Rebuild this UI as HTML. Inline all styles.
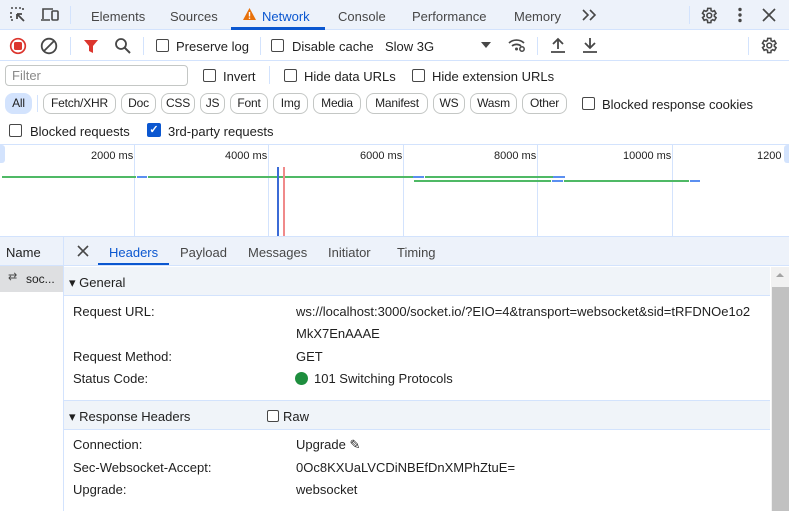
<!DOCTYPE html>
<html><head><meta charset="utf-8"><style>
*{box-sizing:border-box;margin:0;padding:0}
body{width:789px;height:511px;overflow:hidden;background:#fff;font-family:"Liberation Sans",sans-serif;font-size:13px;color:#1f1f1f;position:relative}
.a{position:absolute;white-space:nowrap}
.cb{position:absolute;width:13px;height:13px;border:1.5px solid #474747;border-radius:2px;background:#fff}
.chip{position:absolute;top:93px;height:21px;border:1px solid #c4c7c5;border-radius:8px;font-size:12px;line-height:19px;text-align:center;color:#1f1f1f;letter-spacing:-0.2px}
.vs{position:absolute;width:1px;background:#d3e3fd}
.k{position:absolute;left:73px;font-size:13px;color:#1f1f1f}
.v{position:absolute;left:296px;font-size:13px;color:#1f1f1f}
</style></head><body>
<!-- top tab bar -->
<div class="a" style="left:0;top:0;width:789px;height:30px;background:#edf2fa;border-bottom:1px solid #d3e3fd"></div>
<svg class="a" style="left:9px;top:6px" width="18" height="18" viewBox="0 0 18 18"><path d="M2 2h2M6 2h2M10 2h2M2 6v2M2 10v2M2 14h2M14 2v2" stroke="#474747" stroke-width="1.6" fill="none"/><path d="M8 8l7 7M8 8h5M8 8v5" stroke="#474747" stroke-width="1.8" fill="none"/></svg>
<svg class="a" style="left:40px;top:6px" width="20" height="18" viewBox="0 0 20 18"><path d="M3 13V3h10M1 14h9" stroke="#474747" stroke-width="1.6" fill="none"/><rect x="12" y="5" width="6" height="9" rx="1" stroke="#474747" stroke-width="1.6" fill="none"/></svg>
<div class="vs" style="left:70px;top:6px;height:18px"></div>
<div class="a" style="left:91px;top:9px;color:#474747">Elements</div>
<div class="a" style="left:170px;top:9px;color:#474747">Sources</div>
<svg class="a" style="left:242px;top:7px" width="15" height="14" viewBox="0 0 15 14"><path d="M7.5 1L14 13H1z" fill="#e8710a"/><rect x="6.8" y="5" width="1.4" height="4.5" fill="#fff"/><rect x="6.8" y="10.5" width="1.4" height="1.4" fill="#fff"/></svg>
<div class="a" style="left:262px;top:9px;color:#0b57d0">Network</div>
<div class="a" style="left:231px;top:27px;width:94px;height:3px;background:#0b57d0"></div>
<div class="a" style="left:338px;top:9px;color:#474747">Console</div>
<div class="a" style="left:412px;top:9px;color:#474747">Performance</div>
<div class="a" style="left:514px;top:9px;color:#474747">Memory</div>
<svg class="a" style="left:581px;top:8px" width="16" height="14"><path d="M2 2l5 5-5 5M9 2l5 5-5 5" stroke="#474747" stroke-width="1.6" fill="none"/></svg>
<div class="vs" style="left:689px;top:6px;height:18px"></div>
<svg class="a" style="left:699px;top:6px" width="19" height="19" viewBox="0 0 24 24"><path d="M19.4 13a7.5 7.5 0 0 0 0-2l2.1-1.6-2-3.5-2.5 1a7.6 7.6 0 0 0-1.7-1L15 3h-4l-.4 2.7a7.6 7.6 0 0 0-1.7 1l-2.5-1-2 3.5L6.6 11a7.5 7.5 0 0 0 0 2l-2.1 1.6 2 3.5 2.5-1a7.6 7.6 0 0 0 1.7 1L11 21h4l.4-2.7a7.6 7.6 0 0 0 1.7-1l2.5 1 2-3.5z" fill="none" stroke="#474747" stroke-width="2"/><circle cx="13" cy="12" r="3" fill="none" stroke="#474747" stroke-width="2"/></svg>
<svg class="a" style="left:737px;top:7px" width="6" height="16"><circle cx="3" cy="2.5" r="1.7" fill="#474747"/><circle cx="3" cy="8" r="1.7" fill="#474747"/><circle cx="3" cy="13.5" r="1.7" fill="#474747"/></svg>
<svg class="a" style="left:762px;top:8px" width="14" height="14"><path d="M1 1l12 12M13 1L1 13" stroke="#474747" stroke-width="1.7"/></svg>
<!-- toolbar -->
<div class="a" style="left:0;top:60px;width:789px;height:1px;background:#d3e3fd"></div>
<svg class="a" style="left:9px;top:37px" width="18" height="18"><circle cx="9" cy="9" r="7.3" fill="none" stroke="#dc362e" stroke-width="1.7"/><rect x="5" y="5" width="8" height="8" rx="1.5" fill="#dc362e"/></svg>
<svg class="a" style="left:40px;top:37px" width="18" height="18"><circle cx="9" cy="9" r="7.3" fill="none" stroke="#474747" stroke-width="1.8"/><path d="M4 14L14 4" stroke="#474747" stroke-width="1.8"/></svg>
<div class="vs" style="left:70px;top:37px;height:18px"></div>
<svg class="a" style="left:83px;top:38px" width="16" height="16"><path d="M1 2h14l-5 6v7l-4-2V8z" fill="#dc362e"/></svg>
<svg class="a" style="left:114px;top:37px" width="18" height="18"><circle cx="7" cy="7" r="5" fill="none" stroke="#474747" stroke-width="1.8"/><path d="M10.5 10.5L16 16" stroke="#474747" stroke-width="2"/></svg>
<div class="vs" style="left:143px;top:37px;height:18px"></div>
<div class="cb" style="left:156px;top:39px"></div>
<div class="a" style="left:176px;top:39px">Preserve log</div>
<div class="vs" style="left:260px;top:37px;height:18px"></div>
<div class="cb" style="left:271px;top:39px"></div>
<div class="a" style="left:292px;top:39px">Disable cache</div>
<div class="a" style="left:385px;top:39px">Slow 3G</div>
<svg class="a" style="left:480px;top:41px" width="12" height="8"><path d="M1 1h10L6 7z" fill="#474747"/></svg>
<svg class="a" style="left:507px;top:36px" width="20" height="18" viewBox="0 0 20 18"><path d="M2 7a11 11 0 0 1 15 0M5 10a7 7 0 0 1 9 0" stroke="#474747" stroke-width="1.7" fill="none"/><circle cx="9.5" cy="13" r="1.5" fill="#474747"/><circle cx="15" cy="13" r="2.2" fill="none" stroke="#474747" stroke-width="1.5"/></svg>
<div class="vs" style="left:537px;top:37px;height:18px"></div>
<svg class="a" style="left:549px;top:36px" width="18" height="18"><path d="M9 13V3M4 8l5-5 5 5M2 16h14" stroke="#474747" stroke-width="1.8" fill="none"/></svg>
<svg class="a" style="left:581px;top:36px" width="18" height="18"><path d="M9 2v10M4 7l5 5 5-5M2 16h14" stroke="#474747" stroke-width="1.8" fill="none"/></svg>
<div class="vs" style="left:748px;top:37px;height:18px"></div>
<svg class="a" style="left:759px;top:36px" width="19" height="19" viewBox="0 0 24 24"><path d="M19.4 13a7.5 7.5 0 0 0 0-2l2.1-1.6-2-3.5-2.5 1a7.6 7.6 0 0 0-1.7-1L15 3h-4l-.4 2.7a7.6 7.6 0 0 0-1.7 1l-2.5-1-2 3.5L6.6 11a7.5 7.5 0 0 0 0 2l-2.1 1.6 2 3.5 2.5-1a7.6 7.6 0 0 0 1.7 1L11 21h4l.4-2.7a7.6 7.6 0 0 0 1.7-1l2.5 1 2-3.5z" fill="none" stroke="#474747" stroke-width="2"/><circle cx="13" cy="12" r="3" fill="none" stroke="#474747" stroke-width="2"/></svg>
<!-- filter row -->
<div class="a" style="left:5px;top:65px;width:183px;height:21px;border:1px solid #c4c7c5;border-radius:4px;color:#8a8a8a;padding:2px 6px;font-size:13px">Filter</div>
<div class="cb" style="left:203px;top:69px"></div>
<div class="a" style="left:223px;top:69px">Invert</div>
<div class="vs" style="left:269px;top:66px;height:18px"></div>
<div class="cb" style="left:284px;top:69px"></div>
<div class="a" style="left:304px;top:69px">Hide data URLs</div>
<div class="cb" style="left:412px;top:69px"></div>
<div class="a" style="left:432px;top:69px">Hide extension URLs</div>
<!-- chips -->
<div class="chip" style="left:5px;width:27px;border-color:#d3e3fd;background:#d3e3fd">All</div>
<div class="vs" style="left:37px;top:95px;height:17px"></div>
<div class="chip" style="left:43px;width:73px">Fetch/XHR</div>
<div class="chip" style="left:121px;width:35px">Doc</div>
<div class="chip" style="left:161px;width:34px">CSS</div>
<div class="chip" style="left:200px;width:25px">JS</div>
<div class="chip" style="left:230px;width:38px">Font</div>
<div class="chip" style="left:273px;width:35px">Img</div>
<div class="chip" style="left:313px;width:48px">Media</div>
<div class="chip" style="left:366px;width:62px">Manifest</div>
<div class="chip" style="left:433px;width:32px">WS</div>
<div class="chip" style="left:470px;width:47px">Wasm</div>
<div class="chip" style="left:522px;width:45px">Other</div>
<div class="cb" style="left:582px;top:97px"></div>
<div class="a" style="left:602px;top:97px">Blocked response cookies</div>
<div class="cb" style="left:9px;top:124px"></div>
<div class="a" style="left:30px;top:124px">Blocked requests</div>
<div class="a" style="left:147px;top:123px;width:14px;height:14px;background:#0b57d0;border-radius:2px;color:#fff;font-size:11px;line-height:14px;text-align:center;font-weight:bold">✓</div>
<div class="a" style="left:168px;top:124px">3rd-party requests</div>
<!-- overview -->
<div class="a" style="left:0;top:144px;width:789px;height:1px;background:#d3e3fd"></div>
<div class="a" style="left:0;top:145px;width:5px;height:18px;background:#d3e3fd;border-radius:0 3px 3px 0"></div>
<div class="a" style="left:784px;top:145px;width:5px;height:18px;background:#d3e3fd;border-radius:3px 0 0 3px"></div>
<div class="vs" style="left:134px;top:145px;height:91px"></div>
<div class="vs" style="left:268px;top:145px;height:91px"></div>
<div class="vs" style="left:403px;top:145px;height:91px"></div>
<div class="vs" style="left:537px;top:145px;height:91px"></div>
<div class="vs" style="left:672px;top:145px;height:91px"></div>
<div class="a" style="left:91px;top:150px;font-size:11px">2000 ms</div>
<div class="a" style="left:225px;top:150px;font-size:11px">4000 ms</div>
<div class="a" style="left:360px;top:150px;font-size:11px">6000 ms</div>
<div class="a" style="left:494px;top:150px;font-size:11px">8000 ms</div>
<div class="a" style="left:623px;top:150px;font-size:11px">10000 ms</div>
<div class="a" style="left:757px;top:150px;font-size:11px">1200</div>
<div class="a" style="left:2px;top:176px;width:134px;height:2px;background:#4fb965"></div>
<div class="a" style="left:137px;top:176px;width:10px;height:2px;background:#5b8ff0"></div>
<div class="a" style="left:148px;top:176px;width:265px;height:2px;background:#4fb965"></div>
<div class="a" style="left:413px;top:176px;width:11px;height:2px;background:#5b8ff0"></div>
<div class="a" style="left:425px;top:176px;width:128px;height:2px;background:#4fb965"></div>
<div class="a" style="left:553px;top:176px;width:12px;height:2px;background:#5b8ff0"></div>
<div class="a" style="left:414px;top:180px;width:137px;height:2px;background:#4fb965"></div>
<div class="a" style="left:552px;top:180px;width:11px;height:2px;background:#5b8ff0"></div>
<div class="a" style="left:564px;top:180px;width:125px;height:2px;background:#4fb965"></div>
<div class="a" style="left:690px;top:180px;width:10px;height:2px;background:#5b8ff0"></div>
<div class="a" style="left:277px;top:167px;width:1.5px;height:69px;background:#3b6bd6"></div>
<div class="a" style="left:283px;top:167px;width:1.5px;height:69px;background:#f08a8a"></div>
<!-- bottom panel -->
<div class="a" style="left:0;top:236px;width:789px;height:30px;background:#edf2fa;border-top:1px solid #d3e3fd;border-bottom:1px solid #d3e3fd"></div>
<div class="vs" style="left:63px;top:237px;height:274px"></div>
<div class="a" style="left:6px;top:245px">Name</div>
<div class="a" style="left:0;top:266px;width:63px;height:26px;background:#dedfe1"></div>
<div class="a" style="left:8px;top:270px;font-size:11px;color:#474747">⇄</div>
<div class="a" style="left:26px;top:272px;font-size:12px">soc...</div>
<svg class="a" style="left:77px;top:245px" width="12" height="12"><path d="M1 1l10 10M11 1L1 11" stroke="#474747" stroke-width="1.6"/></svg>
<div class="a" style="left:109px;top:245px;color:#0b57d0">Headers</div>
<div class="a" style="left:98px;top:263px;width:71px;height:2px;background:#0b57d0"></div>
<div class="a" style="left:180px;top:245px;color:#474747">Payload</div>
<div class="a" style="left:248px;top:245px;color:#474747">Messages</div>
<div class="a" style="left:328px;top:245px;color:#474747">Initiator</div>
<div class="a" style="left:397px;top:245px;color:#474747">Timing</div>
<!-- General -->
<div class="a" style="left:64px;top:267px;width:706px;height:29px;background:#f0f4f9;border-bottom:1px solid #d3e3fd"></div>
<div class="a" style="left:69px;top:275px;font-size:13px">▾ General</div>
<div class="k" style="top:304px">Request URL:</div>
<div class="v" style="top:304px">ws://localhost:3000/socket.io/?EIO=4&amp;transport=websocket&amp;sid=tRFDNOe1o2</div>
<div class="v" style="top:326px">MkX7EnAAAE</div>
<div class="k" style="top:349px">Request Method:</div>
<div class="v" style="top:349px">GET</div>
<div class="k" style="top:371px">Status Code:</div>
<div class="a" style="left:295px;top:372px;width:13px;height:13px;border-radius:50%;background:#1e8e3e"></div>
<div class="a" style="left:314px;top:371px">101 Switching Protocols</div>
<!-- Response headers -->
<div class="a" style="left:64px;top:400px;width:706px;height:30px;background:#f0f4f9;border-top:1px solid #d3e3fd;border-bottom:1px solid #d3e3fd"></div>
<div class="a" style="left:69px;top:409px">▾ Response Headers</div>
<div class="cb" style="left:267px;top:410px;width:12px;height:12px;border-width:1px"></div>
<div class="a" style="left:283px;top:409px">Raw</div>
<div class="k" style="top:437px">Connection:</div>
<div class="v" style="top:437px">Upgrade ✎</div>
<div class="k" style="top:460px">Sec-Websocket-Accept:</div>
<div class="v" style="top:460px">0Oc8KXUaLVCDiNBEfDnXMPhZtuE=</div>
<div class="k" style="top:482px">Upgrade:</div>
<div class="v" style="top:482px">websocket</div>
<!-- scrollbar -->
<div class="a" style="left:771px;top:267px;width:18px;height:244px;background:#f1f1f1"></div>
<svg class="a" style="left:774px;top:271px" width="12" height="8"><path d="M2 6h8L6 2z" fill="#a3a3a3"/></svg>
<div class="a" style="left:772px;top:287px;width:17px;height:224px;background:#c1c1c1"></div>
</body></html>
